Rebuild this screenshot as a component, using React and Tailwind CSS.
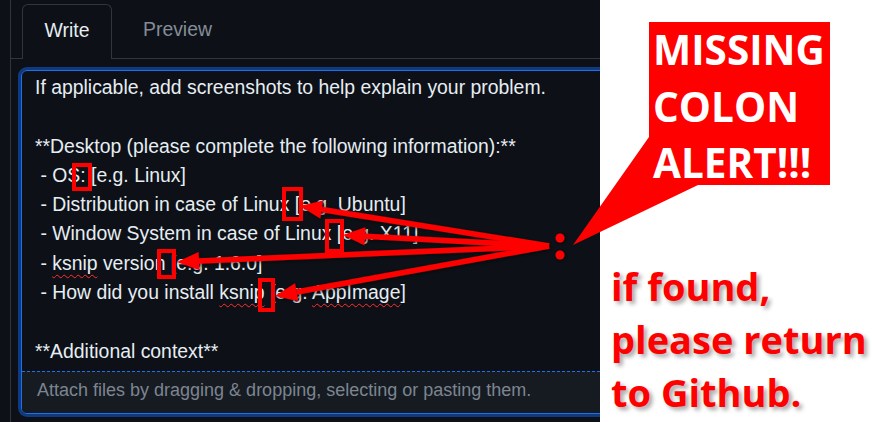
import React from "react";

const lines = [
  "If applicable, add screenshots to help explain your problem.",
  "",
  "**Desktop (please complete the following information):**",
  null,
  " - Distribution in case of Linux [e.g. Ubuntu]",
  " - Window System in case of Linux [e.g. X11]",
  "ksnip-version",
  "ksnip-install",
  "",
  "**Additional context**",
];

const boxes = [
  [74, 165, 16, 24],
  [284, 189, 17, 30],
  [327, 221, 15, 30],
  [159, 251, 15, 26],
  [260, 280, 13, 30],
];

const arrows = [
  [300, 206],
  [343, 235],
  [177, 262],
  [275, 296],
];

const FROM = [549, 246];

const Squiggle = ({ children }) => (
  <span className="underline decoration-wavy decoration-[#ff3030] decoration-1 underline-offset-[4px]">
    {children}
  </span>
);

const Arrow = ({ to }) => {
  const [x1, y1] = FROM;
  const [x2, y2] = to;
  const dx = x2 - x1;
  const dy = y2 - y1;
  const len = Math.hypot(dx, dy);
  const ux = dx / len;
  const uy = dy / len;
  const head = 22;
  const half = 9;
  const bx = x2 - ux * head;
  const by = y2 - uy * head;
  const pts = [
    [x2, y2],
    [bx - uy * half, by + ux * half],
    [bx + uy * half, by - ux * half],
  ]
    .map((p) => p.join(","))
    .join(" ");
  return (
    <g>
      <line x1={x1} y1={y1} x2={bx} y2={by} stroke="#ff0000" strokeWidth="5.5" />
      <polygon points={pts} fill="#ff0000" />
    </g>
  );
};

const Annotations = () => (
  <svg
    className="absolute top-0 left-0 pointer-events-none"
    width="873"
    height="422"
    viewBox="0 0 873 422"
  >
    <defs>
      <filter id="glow" x="-20%" y="-20%" width="140%" height="140%">
        <feDropShadow dx="1" dy="1" stdDeviation="2" floodColor="#000" floodOpacity="0.7" />
      </filter>
    </defs>
    <polygon points="649,137 649,185 698,185 573,245" fill="#ff0000" />
    <g filter="url(#glow)">
      {arrows.map((a, i) => (
        <Arrow key={i} to={a} />
      ))}
      <circle cx="560" cy="238" r="4.5" fill="#ff0000" />
      <circle cx="560" cy="255" r="4.5" fill="#ff0000" />
    </g>
    {boxes.map(([x, y, w, h], i) => (
      <rect key={i} x={x} y={y} width={w} height={h} fill="none" stroke="#ff0000" strokeWidth="4" />
    ))}
  </svg>
);

const Editor = () => (
  <div className="w-[600px] h-[422px] overflow-hidden bg-[#0d1117] pl-[10px]">
    <div className="h-full border-l border-[#30363d]">
      {/* tabs */}
      <div className="h-[59px] border-b border-[#30363d] flex items-end pl-[11px] text-[19.4px] leading-[29px]">
        <div className="w-[90px] h-[55px] -mb-px border border-b-0 border-[#30363d] rounded-t-md bg-[#0d1117] text-[#e6edf3] flex justify-center pt-[11px]">
          Write
        </div>
        <div className="ml-[31px] h-[55px] text-[#848d97] pt-[12px]">Preview</div>
      </div>

      {/* textarea */}
      <div className="mt-[11px] ml-[10px] w-[640px] h-[344px] border border-[#1f6feb] rounded-md shadow-[0_0_0_3px_#0f3a80] flex flex-col overflow-hidden">
        <div className="h-[300px] pt-[2px] pl-[13px] text-[19.4px] leading-[29.3px] text-[#e6edf3] whitespace-pre">
          {lines.map((l, i) => {
            if (l === null)
              return <div key={i}>{" - OS: [e.g. Linux]"}</div>;
            if (l === "ksnip-version")
              return (
                <div key={i}>
                  {" - "}
                  <Squiggle>ksnip</Squiggle>
                  {" version [e.g. 1.6.0]"}
                </div>
              );
            if (l === "ksnip-install")
              return (
                <div key={i}>
                  {" - How did you install "}
                  <Squiggle>ksnip</Squiggle>
                  {" [e.g. "}
                  <Squiggle>AppImage</Squiggle>
                  {"]"}
                </div>
              );
            return <div key={i}>{l || "\u00a0"}</div>;
          })}
        </div>
        <div className="flex-1 border-t border-dashed border-[#1f6feb] bg-[#161b22] pl-[15px] pt-[8px] text-[18px] leading-[20px] text-[#7d8590]">
          Attach files by dragging &amp; dropping, selecting or pasting them.
        </div>
      </div>
    </div>
  </div>
);

export default function App() {
  return (
    <div
      className="relative w-[873px] h-[422px] flex overflow-hidden"
      style={{ fontFamily: '"Liberation Sans", Arial, sans-serif' }}
    >
      <Editor />
      <div className="flex-1 bg-white font-['Open_Sans',sans-serif] font-bold">
        <div className="mt-[22px] ml-[49px] w-[181px] h-[163px] bg-[#ff0000] pl-[4px] text-white text-[40.5px] leading-[56.5px]">
          <div>MISSING</div>
          <div>COLON</div>
          <div>ALERT!!!</div>
        </div>
        <div className="mt-[75px] ml-[11px] text-[#ff0000] text-[38px] leading-[53px] whitespace-nowrap [text-shadow:3px_3px_4px_rgba(0,0,0,0.35)]">
          <div>if found,</div>
          <div>please return</div>
          <div>to Github.</div>
        </div>
      </div>
      <Annotations />
    </div>
  );
}
